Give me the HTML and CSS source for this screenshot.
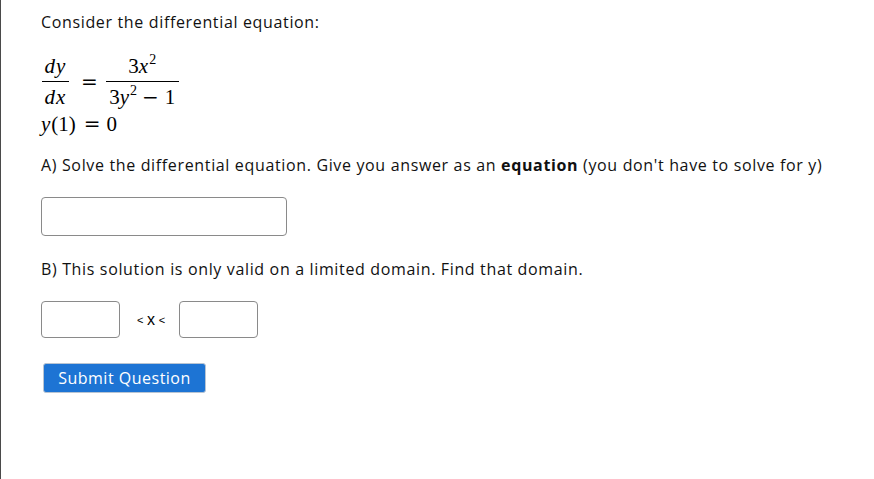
FILE: index.html
```html
<!DOCTYPE html>
<html>
<head>
<meta charset="utf-8">
<link rel="stylesheet" href="styles.css">
</head>
<body>
<div class="page">
  <p class="line intro">Consider the differential equation:</p>
  <div class="math">
    <div class="eqrow">
      <span class="frac lfrac">
        <span class="num"><i>dy</i></span>
        <span class="den"><i>dx</i></span>
      </span>
      <span class="op eq">=</span>
      <span class="frac rfrac">
        <span class="num">3<i>x</i><sup>2</sup></span>
        <span class="den">3<i>y</i><sup>2</sup><span class="op minus">−</span>1</span>
      </span>
    </div>
    <div class="ic"><i>y</i>(1)<span class="op eq2">=</span>0</div>
  </div>
  <p class="line qa">A) Solve the differential equation. Give you answer as an <b>equation</b> (you don't have to solve for y)</p>
  <div class="field-row"><input class="box wide" type="text"></div>
  <p class="line qb">B) This solution is only valid on a limited domain. Find that domain.</p>
  <div class="domain">
    <input class="box small" type="text">
    <span class="ineq"><span class="lt">&lt;</span> <span class="xv">x</span> <span class="lt">&lt;</span></span>
    <input class="box small" type="text">
  </div>
  <button class="submit" type="button">Submit Question</button>
</div>
</body>
</html>
```

FILE: styles.css
```css
html, body {
  margin: 0;
  padding: 0;
  height: 100%;
  background: #fff;
}
body {
  border-left: 1px solid #4a4a4a;
  box-sizing: border-box;
  font-family: "Open Sans", "Noto Sans", sans-serif;
  font-size: 16px;
  color: #111;
}
.page {
  padding: 0 0 0 40px;
}
.line {
  margin: 0;
  line-height: 22px;
  letter-spacing: 0.65px;
  white-space: nowrap;
}
.intro {
  padding-top: 11px;
}
.math {
  font-family: "Liberation Serif", "DejaVu Serif", serif;
  font-size: 21px;
  color: #000;
  margin-top: 21px;
}
.math i {
  font-style: italic;
  letter-spacing: 1px;
}
.eqrow {
  display: flex;
  align-items: center;
}
.frac {
  display: inline-flex;
  flex-direction: column;
  align-items: center;
}
.frac .num {
  line-height: 24px;
  padding-bottom: 3px;
  border-bottom: 1px solid #000;
  width: 100%;
  text-align: center;
}
.frac .den {
  line-height: 24px;
  padding-top: 3px;
  white-space: nowrap;
}
.lfrac {
  margin-left: 1px;
  width: 27px;
}
.op {
  font-family: "DejaVu Serif", serif;
  font-size: 20px;
}
.eq {
  margin: 0 8px 0 12px;
}
.rfrac {
  width: 73px;
}
sup {
  font-size: 14px;
  line-height: 0;
  vertical-align: 9px;
  letter-spacing: 0;
}
.minus {
  margin: 0 6px 0 5px;
}
.ic {
  line-height: 24px;
  margin-top: 3px;
}
.eq2 {
  margin: 0 6px 0 8px;
}
.qa {
  margin-top: 18px;
}
.field-row {
  margin-top: 21px;
}
.box {
  box-sizing: border-box;
  border: 1px solid #8a8a8a;
  border-radius: 4px;
  background: #fff;
  margin: 0;
  padding: 0;
  display: block;
}
.wide {
  width: 246px;
  height: 39px;
}
.qb {
  margin-top: 22px;
}
.domain {
  display: flex;
  align-items: center;
  margin-top: 21px;
}
.small {
  width: 79px;
  height: 37px;
}
.ineq {
  font-family: "Liberation Sans", Arial, sans-serif;
  margin: 0 14px 0 17px;
  white-space: pre;
  font-size: 13px;
  color: #000;
}
.xv {
  font-size: 16px;
}
.lt {
  font-size: 11px;
  vertical-align: 1px;
}
.submit {
  display: block;
  margin: 25px 0 0 2px;
  width: 163px;
  height: 30px;
  background: #1d74d4;
  color: #fff;
  border: 1px solid #b8c4d2;
  border-radius: 3px;
  font-family: "Open Sans", "Noto Sans", sans-serif;
  font-size: 16px;
  letter-spacing: 0.5px;
  padding: 0;
}
```
